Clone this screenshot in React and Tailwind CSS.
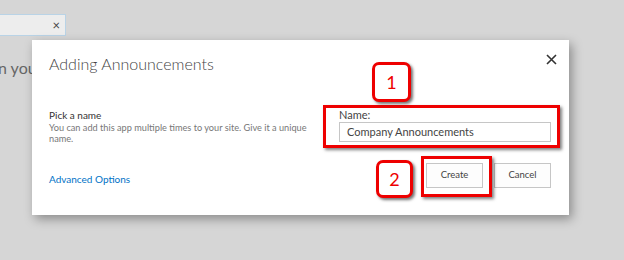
import React from "react";

const font = { fontFamily: 'Lato, "Open Sans", "Liberation Sans", sans-serif' };

function Callout({ n, className }) {
    return (
        <div className={`absolute flex items-center justify-center bg-white border-[3px] border-[#ee0000] rounded-[7px] shadow-[2px_2px_3px_rgba(0,0,0,0.55)] text-[18px] text-[#ee0000] ${className}`}>
            {n}
        </div>
    );
}

export default function App() {
    return (
        <div className="relative w-[624px] h-[260px] overflow-hidden bg-[#d6d6d6]" style={font}>
            {/* page behind the dialog */}
            <div className="pt-[14px]">
                <div className="w-[66px] h-[22px] border border-[#b9d3e6] border-l-0 bg-[#ededed] flex items-center justify-end pr-[5px]">
                    <span className="text-[13px] text-[#444] leading-none">×</span>
                </div>
                <div className="mt-[24px] -ml-[2px] text-[16px] text-[#666] leading-none">n you</div>
            </div>

            {/* dialog */}
            <div className="absolute left-[32px] top-[40px] w-[537px] h-[175px] bg-white shadow-[3px_4px_10px_rgba(0,0,0,0.35)] pl-[17px] pr-[16px] pt-[12px]">
                <div className="flex items-start justify-between">
                    <h1 className="text-[16px] font-light text-[#444] leading-[24px]">Adding Announcements</h1>
                    <button className="mt-[2px] -mr-[4px] text-[#333]">
                        <svg width="11" height="11" viewBox="0 0 11 11"><path d="M1 1L10 10M10 1L1 10" stroke="#333" strokeWidth="1.6" /></svg>
                    </button>
                </div>

                <div className="flex mt-[27px]">
                    <div className="w-[262px]">
                        <div className="text-[10px] text-[#333] leading-[12px] mt-[6px]">Pick a name</div>
                        <p className="text-[9.2px] text-[#777] leading-[11px] mt-[1px]">
                            You can add this app multiple times to your site. Give it a unique name.
                        </p>
                        <a className="block mt-[29px] text-[10px] text-[#0072c6] leading-[12px]">Advanced Options</a>
                    </div>
                    <div className="ml-[28px] w-[212px]">
                        <label className="block text-[11px] text-[#444] leading-[13px] mt-[5px]">Name:</label>
                        <div className="mt-[1px] h-[20px] border border-[#c6c6c6] flex items-center pl-[7px] text-[11px] text-[#444]">
                            Company Announcements
                        </div>
                        <div className="flex justify-end gap-[11px] mt-[21px]">
                            <button className="w-[57px] h-[25px] border border-[#c6c6c6] bg-[#fdfdfd] text-[9.5px] text-[#444]">Create</button>
                            <button className="w-[57px] h-[25px] border border-[#c6c6c6] bg-[#fdfdfd] text-[9.5px] text-[#444]">Cancel</button>
                        </div>
                    </div>
                </div>
            </div>

            {/* annotations */}
            <div className="absolute left-[323px] top-[105px] w-[237px] h-[43px] border-[3px] border-[#ee0000] shadow-[2px_2px_3px_rgba(0,0,0,0.5)]" />
            <div className="absolute left-[421px] top-[156px] w-[71px] h-[41px] border-[3px] border-[#ee0000] shadow-[2px_2px_3px_rgba(0,0,0,0.5)]" />
            <Callout n="1" className="left-[372px] top-[62px] w-[39px] h-[40px]" />
            <Callout n="2" className="left-[376px] top-[160px] w-[37px] h-[38px]" />
        </div>
    );
}
